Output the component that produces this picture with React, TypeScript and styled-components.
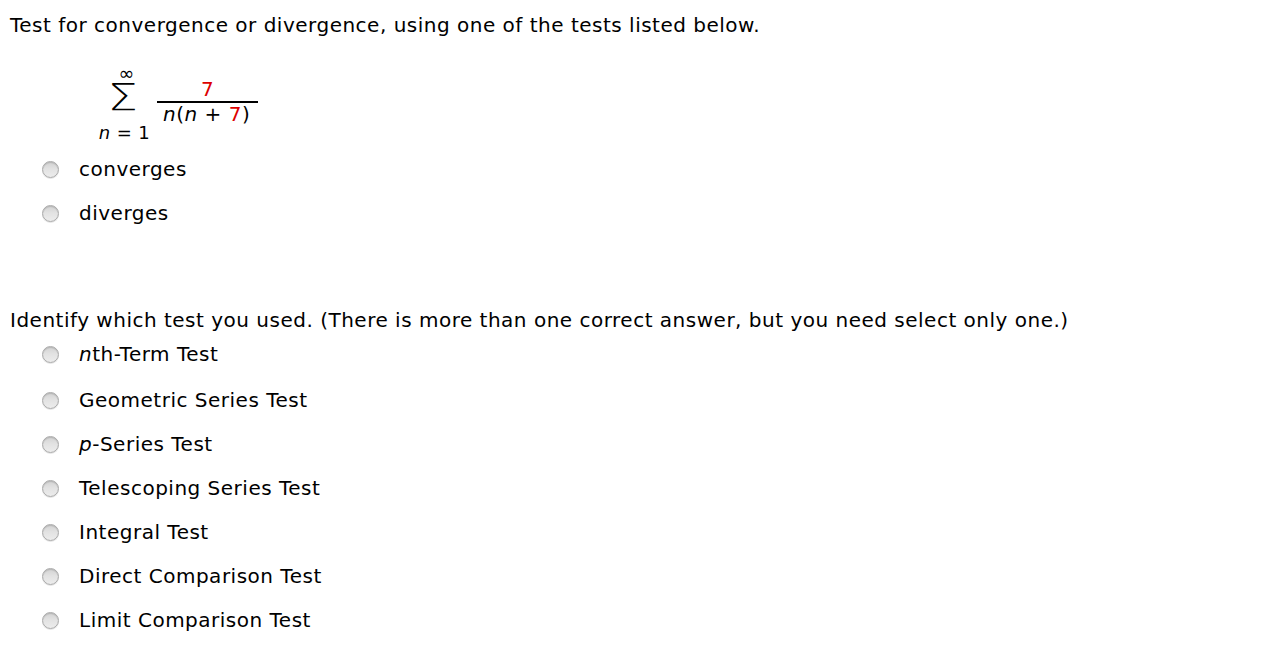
import React from "react";
import styled, { createGlobalStyle } from "styled-components";

const Global = createGlobalStyle`
  html, body { margin: 0; padding: 0; background: #fff; }
  body { font-family: "DejaVu Sans", Verdana, sans-serif; color: #000; }
`;

const Page = styled.div`
  padding: 13px 10px 0 10px;
  font-size: 20px;
  letter-spacing: 0.5px;
`;

const Prompt = styled.div`
  line-height: 24px;
`;

const MathBlock = styled.div`
  display: flex;
  align-items: flex-start;
  margin: 27px 0 0 88px;
  height: 93px;
`;

const SumCol = styled.div`
  display: flex;
  flex-direction: column;
  align-items: center;
  width: 53px;
  padding-top: 2px;
  letter-spacing: 0;
`;

const Inf = styled.span`
  font-size: 19px;
  line-height: 14px;
  margin-left: 4px;
`;

const Sigma = styled.span`
  display: inline-block;
  font-size: 37px;
  font-weight: 200;
  line-height: 32px;
  margin-top: 2px;
  transform: scaleX(1.3);
  margin-right: 4px;
`;

const Lower = styled.span`
  font-size: 18px;
  line-height: 20px;
  margin-top: 9px;
  letter-spacing: 0.4px;
`;

const Frac = styled.div`
  display: flex;
  flex-direction: column;
  align-items: stretch;
  text-align: center;
  margin-left: 6px;
  margin-top: 13px;
`;

const Num = styled.span`
  line-height: 24px;
`;

const Den = styled.span`
  border-top: 2px solid #000;
  padding: 0 8px 0 6px;
  line-height: 22px;
`;

const Red = styled.span`
  color: #dd0000;
`;

const Var = styled.i`
  font-style: italic;
`;

const Options = styled.div`
  display: flex;
  flex-direction: column;
  gap: 20px;
  margin-left: 32px;
`;

const Opt = styled.label<{ $extraBelow?: number }>`
  display: flex;
  align-items: center;
  height: 24px;
  gap: 20px;
  margin-bottom: ${(p) => p.$extraBelow ?? 0}px;
`;

const Radio = styled.span`
  width: 17px;
  height: 17px;
  box-sizing: border-box;
  border-radius: 50%;
  border: 1px solid #a9a9a9;
  background: linear-gradient(#d2d2d2 0%, #e2e2e2 45%, #ececec 100%);
  box-shadow: inset 0 1px 1px rgba(0, 0, 0, 0.14), 0 1px 0 rgba(0, 0, 0, 0.1);
  flex: none;
`;

const Identify = styled.div`
  line-height: 24px;
  margin: 83px 0 10px;
`;

const q1 = ["converges", "diverges"];
const q2: React.ReactNode[] = [
  <><Var>n</Var>th-Term Test</>,
  "Geometric Series Test",
  <><Var>p</Var>-Series Test</>,
  "Telescoping Series Test",
  "Integral Test",
  "Direct Comparison Test",
  "Limit Comparison Test",
];

export default function App() {
  return (
    <>
      <Global />
      <Page>
        <Prompt>Test for convergence or divergence, using one of the tests listed below.</Prompt>
        <MathBlock>
          <SumCol>
            <Inf>∞</Inf>
            <Sigma>Σ</Sigma>
            <Lower><Var>n</Var> = 1</Lower>
          </SumCol>
          <Frac>
            <Num><Red>7</Red></Num>
            <Den><Var>n</Var>(<Var>n</Var> + <Red>7</Red>)</Den>
          </Frac>
        </MathBlock>
        <Options>
          {q1.map((t) => (
            <Opt key={t}><Radio /><span>{t}</span></Opt>
          ))}
        </Options>
        <Identify>Identify which test you used. (There is more than one correct answer, but you need select only one.)</Identify>
        <Options>
          {q2.map((t, i) => (
            <Opt key={i} $extraBelow={i === 0 ? 2 : 0}><Radio /><span>{t}</span></Opt>
          ))}
        </Options>
      </Page>
    </>
  );
}
